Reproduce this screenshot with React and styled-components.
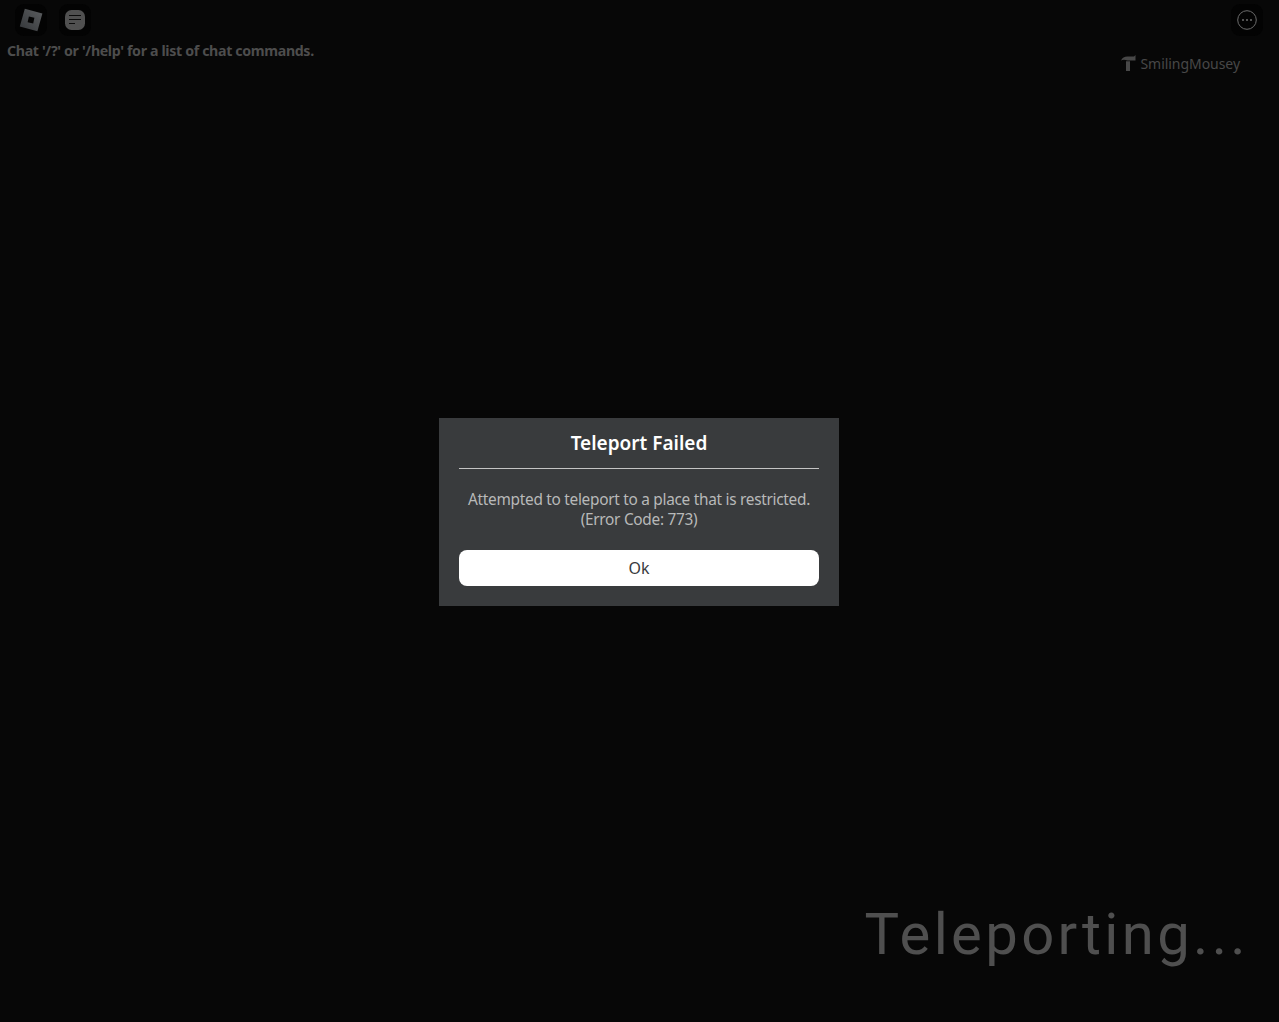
import React from "react";
import styled, { createGlobalStyle } from "styled-components";

const GlobalStyle = createGlobalStyle`
  html, body {
    margin: 0;
    padding: 0;
    background: #070707;
  }
  * {
    box-sizing: border-box;
  }
`;

const Page = styled.div`
  display: grid;
  grid-template-rows: 418px auto 1fr;
  width: 100%;
  height: 100vh;
  overflow: hidden;
  background: #070707;
  font-family: "Noto Sans", "Open Sans", sans-serif;
`;

const TopArea = styled.div`
  display: flex;
  justify-content: space-between;
  align-items: flex-start;
`;

const LeftColumn = styled.div`
  display: flex;
  flex-direction: column;
`;

const IconRow = styled.div`
  display: flex;
  gap: 12px;
  padding: 4px 0 0 15px;
`;

const IconTile = styled.div`
  display: flex;
  align-items: center;
  justify-content: center;
  width: 32px;
  height: 32px;
  border-radius: 9px;
  background: #030303;
`;

const ChatHint = styled.div`
  margin: 5px 0 0 7px;
  color: #4d4d4d;
  font-size: 14.2px;
  line-height: 20px;
  font-weight: 700;
  letter-spacing: -0.35px;
  white-space: nowrap;
`;

const RightColumn = styled.div`
  display: flex;
  flex-direction: column;
  align-items: flex-end;
  padding: 4px 16px 0 0;
`;

const Player = styled.div`
  display: flex;
  align-items: center;
  gap: 3px;
  margin: 11px 23px 0 0;
  height: 32px;
  color: #484848;
  font-size: 14px;
  letter-spacing: -0.05px;
`;

const DialogRow = styled.div`
  display: flex;
  justify-content: center;
  padding-right: 1px;
`;

const Dialog = styled.div`
  width: 400px;
  height: 188px;
  padding: 0 20px;
  background: #393b3d;
  display: flex;
  flex-direction: column;
`;

const Title = styled.div`
  height: 51px;
  display: flex;
  align-items: center;
  justify-content: center;
  border-bottom: 1px solid #c4c4c4;
  color: #fff;
  font-size: 19px;
  font-weight: 600;
`;

const Message = styled.p`
  margin: 21px -10px 0;
  color: #b8b9b9;
  font-size: 15.4px;
  line-height: 20px;
  letter-spacing: -0.29px;
  text-align: center;
  white-space: nowrap;
`;

const OkButton = styled.button`
  margin-top: 20px;
  height: 36px;
  border: 0;
  border-radius: 8px;
  background: #fff;
  color: #393b3d;
  font-family: inherit;
  font-size: 16px;
  padding: 0;
`;

const BottomArea = styled.div`
  display: flex;
  justify-content: flex-end;
  align-items: flex-end;
  padding: 0 30px 53px 0;
`;

const Teleporting = styled.div`
  color: #4f4f4f;
  font-family: Roboto, sans-serif;
  font-size: 58px;
  font-weight: 400;
  line-height: 70px;
  letter-spacing: 3.35px;
  white-space: nowrap;
`;

function RobloxLogo() {
  return (
    <svg width="26" height="26" viewBox="0 0 26 26">
      <defs>
        <linearGradient id="logoFade" x1="0" y1="1" x2="1" y2="0">
          <stop offset="0" stopColor="#333639" />
          <stop offset="1" stopColor="#5c5e60" />
        </linearGradient>
      </defs>
      <path
        fillRule="evenodd"
        fill="url(#logoFade)"
        d="M6.8 1.8 24.4 6.4 19.4 24.2 1.8 19.4ZM10.9 9.6 9.6 15.2 15.2 16.4 16.4 10.8Z"
      />
    </svg>
  );
}

function ChatIcon() {
  return (
    <svg width="20" height="20" viewBox="0 0 20 20">
      <rect width="20" height="20" rx="6.5" fill="#505050" />
      <path d="M4 5.5H16M4 9.5H16M4 13.5H10" stroke="#0b0b0b" strokeWidth="1.2" />
    </svg>
  );
}

function MoreIcon() {
  return (
    <svg width="20" height="20" viewBox="0 0 20 20">
      <circle cx="10" cy="10" r="9.3" fill="none" stroke="#6c6c6c" strokeWidth="1" />
      <circle cx="6" cy="10" r="1" fill="#6c6c6c" />
      <circle cx="10" cy="10" r="1" fill="#6c6c6c" />
      <circle cx="14" cy="10" r="1" fill="#6c6c6c" />
    </svg>
  );
}

function HammerIcon() {
  return (
    <svg width="16" height="16" viewBox="0 0 16 16">
      <path
        fill="#484848"
        d="M0 5.5C1 2.8 3.5 1.4 6.5 1.4H13L14.5 0V5.6H6.5C4 4.4 1.8 4.4 0 5.5ZM5 6.2H9V16H5Z"
      />
    </svg>
  );
}

export default function App() {
  return (
    <Page>
      <GlobalStyle />
      <TopArea>
        <LeftColumn>
          <IconRow>
            <IconTile>
              <RobloxLogo />
            </IconTile>
            <IconTile>
              <ChatIcon />
            </IconTile>
          </IconRow>
          <ChatHint>Chat '/?' or '/help' for a list of chat commands.</ChatHint>
        </LeftColumn>
        <RightColumn>
          <IconTile>
            <MoreIcon />
          </IconTile>
          <Player>
            <HammerIcon />
            SmilingMousey
          </Player>
        </RightColumn>
      </TopArea>
      <DialogRow>
        <Dialog>
          <Title>Teleport Failed</Title>
          <Message>
            Attempted to teleport to a place that is restricted.
            <br />
            (Error Code: 773)
          </Message>
          <OkButton>Ok</OkButton>
        </Dialog>
      </DialogRow>
      <BottomArea>
        <Teleporting>Teleporting...</Teleporting>
      </BottomArea>
    </Page>
  );
}
